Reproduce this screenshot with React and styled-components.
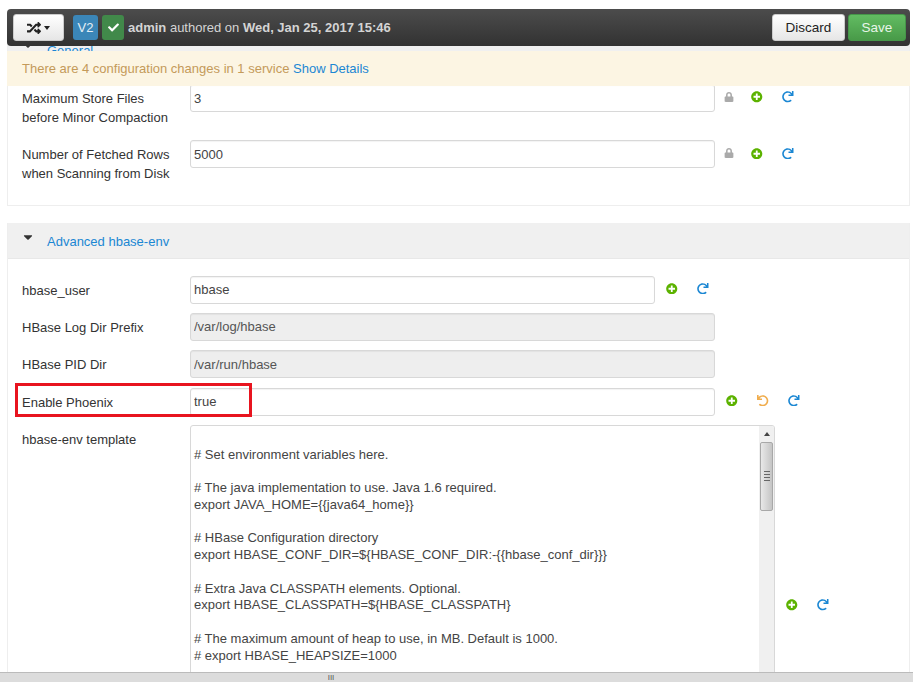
import React from 'react'
import styled, { createGlobalStyle } from 'styled-components'
import { FaCheck, FaLock, FaPlusCircle, FaRandom, FaRedo, FaUndo, FaCaretDown } from 'react-icons/fa'

const GlobalStyle = createGlobalStyle`
  html, body { margin: 0; padding: 0; background: #fff; }
  body { font-family: "Liberation Sans", Arial, sans-serif; font-size: 13px; color: #333; }
`

const template = `
# Set environment variables here.

# The java implementation to use. Java 1.6 required.
export JAVA_HOME={{java64_home}}

# HBase Configuration directory
export HBASE_CONF_DIR=\${HBASE_CONF_DIR:-{{hbase_conf_dir}}}

# Extra Java CLASSPATH elements. Optional.
export HBASE_CLASSPATH=\${HBASE_CLASSPATH}

# The maximum amount of heap to use, in MB. Default is 1000.
# export HBASE_HEAPSIZE=1000
`

const Actions = ({ lock, undo }) => (
  <ActionList>
    {lock && <LockSlot><FaLock /></LockSlot>}
    <Slot $color="#5cb200"><FaPlusCircle /></Slot>
    {undo && <Slot $color="#f0ad4e"><FaUndo /></Slot>}
    <Slot $color="#1b87d3"><FaRedo /></Slot>
  </ActionList>
)

const App = () => {
  return (
    <Page>
      <GlobalStyle />
      <Toolbar>
        <ToolButton><FaRandom /><Caret /></ToolButton>
        <VersionBadge>V2</VersionBadge>
        <CheckBadge><FaCheck /></CheckBadge>
        <Author><b>admin</b> authored on <b>Wed, Jan 25, 2017 15:46</b></Author>
        <ToolbarRight>
          <DiscardButton>Discard</DiscardButton>
          <SaveButton>Save</SaveButton>
        </ToolbarRight>
      </Toolbar>
      <Banner>There are 4 configuration changes in 1 service <BannerLink>Show Details</BannerLink></Banner>

      <Panel>
        <PanelHead><CaretIcon><FaCaretDown /></CaretIcon><PanelTitle>General</PanelTitle></PanelHead>
        <PanelBody>
          <Row>
            <Label>Maximum Store Files<br />before Minor Compaction</Label>
            <Input readOnly value="3" />
            <Actions lock />
          </Row>
          <Row>
            <Label>Number of Fetched Rows<br />when Scanning from Disk</Label>
            <Input readOnly value="5000" />
            <Actions lock />
          </Row>
        </PanelBody>
      </Panel>

      <Panel>
        <PanelHead><CaretIcon><FaCaretDown /></CaretIcon><PanelTitle>Advanced hbase-env</PanelTitle></PanelHead>
        <PanelBody>
          <Row>
            <Label>hbase_user</Label>
            <Input readOnly value="hbase" $width={465} />
            <Actions />
          </Row>
          <Row>
            <Label>HBase Log Dir Prefix</Label>
            <Input disabled value="/var/log/hbase" />
          </Row>
          <Row>
            <Label>HBase PID Dir</Label>
            <Input disabled value="/var/run/hbase" />
          </Row>
          <Row>
            <Label>Enable Phoenix</Label>
            <Input readOnly value="true" />
            <Actions undo />
            <Highlight />
          </Row>
          <TemplateRow>
            <Label>hbase-env template</Label>
            <TemplateBox>
              <TemplateText>{template}</TemplateText>
              <ScrollTrack>
                <ScrollArrow />
                <ScrollThumb><Grip /><Grip /><Grip /><Grip /></ScrollThumb>
              </ScrollTrack>
            </TemplateBox>
            <Actions />
          </TemplateRow>
        </PanelBody>
      </Panel>

      <BottomBar><BarGrip>III</BarGrip></BottomBar>
    </Page>
  )
}

export default App

const Page = styled.div`
  position: relative;
  width: 913px;
  height: 682px;
  padding: 31px 3px 0 7px;
  box-sizing: border-box;
  overflow: hidden;
`

const Toolbar = styled.div`
  position: absolute;
  top: 9px;
  left: 7px;
  width: 903px;
  height: 37px;
  box-sizing: border-box;
  padding: 5px 4px 5px 6px;
  display: flex;
  align-items: center;
  background: linear-gradient(#4c4c4c, #323232);
  border-radius: 4px;
  z-index: 3;
`

const BaseButton = styled.div`
  height: 27px;
  box-sizing: border-box;
  display: flex;
  align-items: center;
  justify-content: center;
  border-radius: 3px;
  font-size: 13.5px;
`

const ToolButton = styled(BaseButton)`
  width: 51px;
  gap: 3px;
  color: #222;
  background: linear-gradient(#fff, #e6e6e6);
  border: 1px solid #ccc;
  font-size: 14px;
`

const Caret = styled.span`
  border-left: 3.5px solid transparent;
  border-right: 3.5px solid transparent;
  border-top: 4px solid #222;
`

const VersionBadge = styled.div`
  width: 25px;
  height: 25px;
  margin-left: 9px;
  display: flex;
  align-items: center;
  justify-content: center;
  background: #3b86b8;
  color: #e4eef5;
  font-size: 13px;
  border-radius: 3px;
`

const CheckBadge = styled.div`
  width: 22px;
  height: 25px;
  margin-left: 4px;
  display: flex;
  align-items: center;
  justify-content: center;
  background: #41894a;
  color: #fff;
  font-size: 11px;
  border-radius: 3px;
`

const Author = styled.div`
  margin-left: 4px;
  color: #d4d4d4;
  font-size: 13px;
  white-space: nowrap;
`

const ToolbarRight = styled.div`
  margin-left: auto;
  display: flex;
  gap: 3px;
`

const DiscardButton = styled(BaseButton)`
  width: 73px;
  color: #222;
  background: linear-gradient(#fff, #e6e6e6);
  border: 1px solid #ccc;
`

const SaveButton = styled(BaseButton)`
  width: 58px;
  color: #e8f5e8;
  background: linear-gradient(#62bc62, #489a48);
  border: 1px solid #46964a;
`

const Banner = styled.div`
  position: absolute;
  top: 51px;
  left: 7px;
  width: 903px;
  height: 35px;
  box-sizing: border-box;
  padding-left: 15px;
  display: flex;
  align-items: center;
  white-space: pre;
  background: #fcf5e3;
  color: #c49a5a;
  font-size: 13px;
  z-index: 2;
`

const BannerLink = styled.span`
  color: #1b87d3;
`

const Panel = styled.section`
  border: 1px solid #eee;
  border-top: 0;
  margin-bottom: 17px;
`

const PanelHead = styled.div`
  height: 36px;
  box-sizing: border-box;
  padding: 3px 0 0 13px;
  display: flex;
  align-items: center;
  background: #f0f0f0;
  border-bottom: 1px solid #e8e8e8;
`

const CaretIcon = styled.span`
  display: flex;
  color: #333;
  font-size: 14px;
  transform: translateY(-5px);
`

const PanelTitle = styled.span`
  margin-left: 12px;
  color: #1b87d3;
  font-size: 13px;
`

const PanelBody = styled.div`
  padding: 17px 0 8px 14px;
`

const Row = styled.div`
  position: relative;
  display: flex;
  align-items: flex-start;
  margin-bottom: 9.33px;
`

const TemplateRow = styled(Row)`
  align-items: center;
`

const Label = styled.div`
  width: 168px;
  flex-shrink: 0;
  padding: 5px 0 4px;
  line-height: 19px;
  font-size: 13px;
  color: #333;
  ${TemplateRow} & {
    align-self: flex-start;
  }
`

const Input = styled.input`
  width: ${(p) => p.$width || 525}px;
  height: 28px;
  box-sizing: border-box;
  padding: 0 3px;
  border: 1px solid #d8d8d8;
  border-radius: 3px;
  box-shadow: inset 0 1px 1px rgba(0, 0, 0, 0.05);
  background: #fff;
  font-family: inherit;
  font-size: 13px;
  color: #444;
  outline: none;
  &:disabled {
    background: #eee;
    color: #555;
    -webkit-text-fill-color: #555;
    opacity: 1;
  }
`

const ActionList = styled.div`
  display: flex;
  align-items: center;
  height: 26px;
  margin-left: 1.5px;
`

const Slot = styled.span`
  width: 31px;
  flex-shrink: 0;
  display: flex;
  justify-content: center;
  color: ${(p) => p.$color};
  font-size: 11.5px;
`

const LockSlot = styled(Slot)`
  width: 25px;
  color: #aaa;
  font-size: 10px;
`

const Highlight = styled.div`
  position: absolute;
  left: -7px;
  top: -5px;
  width: 237px;
  height: 34px;
  box-sizing: border-box;
  border: 3px solid #e8141f;
  pointer-events: none;
`

const TemplateBox = styled.div`
  position: relative;
  width: 585px;
  height: 360px;
  box-sizing: border-box;
  border: 1px solid #d8d8d8;
  border-radius: 3px;
  overflow: hidden;
`

const TemplateText = styled.pre`
  margin: 0;
  padding: 4px 3px;
  font-family: inherit;
  font-size: 13px;
  line-height: 16.75px;
  color: #444;
`

const ScrollTrack = styled.div`
  position: absolute;
  top: 0;
  right: 0;
  bottom: 0;
  width: 15px;
  background: #f0f0f0;
`

const ScrollArrow = styled.div`
  width: 0;
  margin: 6px auto 6px;
  border-left: 3px solid transparent;
  border-right: 3px solid transparent;
  border-bottom: 4px solid #444;
`

const ScrollThumb = styled.div`
  width: 13px;
  height: 69px;
  margin-left: 1px;
  box-sizing: border-box;
  display: flex;
  flex-direction: column;
  align-items: center;
  justify-content: center;
  gap: 2px;
  background: linear-gradient(90deg, #e8e8e8, #c4c4c4);
  border: 1px solid #a8a8a8;
  border-radius: 2px;
`

const Grip = styled.span`
  width: 6px;
  height: 1px;
  background: #666;
`

const BottomBar = styled.div`
  position: absolute;
  left: 0;
  right: 0;
  bottom: 0;
  height: 10px;
  display: flex;
  justify-content: center;
  align-items: center;
  padding-right: 251px;
  background: #dcdcdc;
  border-top: 1px solid #bbb;
  box-sizing: border-box;
  z-index: 4;
`

const BarGrip = styled.span`
  font-size: 8px;
  line-height: 8px;
  color: #555;
`
